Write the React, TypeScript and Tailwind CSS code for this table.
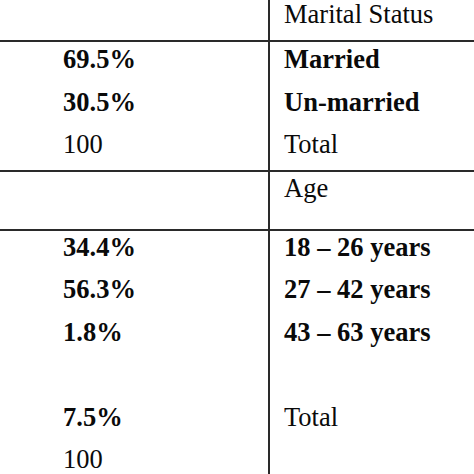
import React from "react";

type Cell = { t: string; b?: boolean };

const Section = ({
  left,
  right,
  h,
  pt,
  rowH,
  last,
}: {
  left: Cell[];
  right: Cell[];
  h: string;
  pt: string;
  rowH: string;
  last?: boolean;
}) => (
  <div className={`flex ${h} ${last ? "" : "border-b-2 border-[#2a2a2a]"}`}>
    <div className={`w-[270px] shrink-0 border-r-2 border-[#2a2a2a] pl-[63px] ${pt}`}>
      {left.map((c, i) => (
        <div key={i} className={`${rowH} leading-[28px] whitespace-nowrap ${c.b ? "font-bold" : ""}`}>
          {c.t}
        </div>
      ))}
    </div>
    <div className={`flex-1 pl-[14px] ${pt}`}>
      {right.map((c, i) => (
        <div key={i} className={`${rowH} leading-[28px] whitespace-nowrap ${c.b ? "font-bold" : ""}`}>
          {c.t}
        </div>
      ))}
    </div>
  </div>
);

export default function App() {
  return (
    <div
      className="w-[474px] h-[474px] overflow-hidden bg-white text-[#0a0a0a] text-[26.5px]"
      style={{ fontFamily: '"Liberation Serif", "Times New Roman", serif' }}
    >
      <Section
        h="h-[42px]"
        pt="pt-0"
        rowH="h-[28px]"
        left={[{ t: "" }]}
        right={[{ t: "Marital Status" }]}
      />
      <Section
        h="h-[130px]"
        pt="pt-[3px]"
        rowH="h-[42.6px]"
        left={[{ t: "69.5%", b: true }, { t: "30.5%", b: true }, { t: "100" }]}
        right={[{ t: "Married", b: true }, { t: "Un-married", b: true }, { t: "Total" }]}
      />
      <Section
        h="h-[59px]"
        pt="pt-[2px]"
        rowH="h-[28px]"
        left={[{ t: "" }]}
        right={[{ t: "Age" }]}
      />
      <Section
        h="h-[243px]"
        pt="pt-[2px]"
        rowH="h-[42.4px]"
        last
        left={[
          { t: "34.4%", b: true },
          { t: "56.3%", b: true },
          { t: "1.8%", b: true },
          { t: "" },
          { t: "7.5%", b: true },
          { t: "100" },
        ]}
        right={[
          { t: "18 – 26 years", b: true },
          { t: "27 – 42 years", b: true },
          { t: "43 – 63 years", b: true },
          { t: "" },
          { t: "Total" },
          { t: "" },
        ]}
      />
    </div>
  );
}
